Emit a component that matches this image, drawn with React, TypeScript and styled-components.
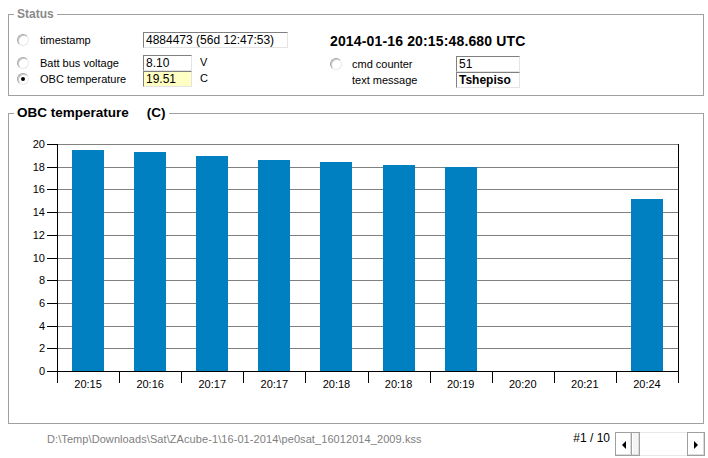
import React from "react";
import styled, { createGlobalStyle } from "styled-components";

const Global = createGlobalStyle`
  html, body { margin: 0; padding: 0; background: #fff; }
  body {
    font-family: "Liberation Sans", Arial, sans-serif;
    font-size: 11px;
    color: #000;
  }
`;

const Page = styled.div`
  width: 708px;
  height: 458px;
  box-sizing: border-box;
  padding: 7px 3px 0 8px;
  overflow: hidden;
  background: #fff;
`;

const GroupBox = styled.fieldset<{ $mt?: number }>`
  margin: ${(p) => p.$mt ?? 0}px 0 0 0;
  padding: 0;
  width: 696px;
  box-sizing: border-box;
  min-width: 0;
  border: 1px solid #a0a0a0;
`;

const Legend = styled.legend<{ $size: number; $lh: number; $color: string }>`
  margin-left: 5px;
  padding: 0 3px;
  font-weight: bold;
  font-size: ${(p) => p.$size}px;
  line-height: ${(p) => p.$lh}px;
  color: ${(p) => p.$color};
  white-space: nowrap;
`;

const LegendUnit = styled.span`
  margin-left: 18px;
`;

const StatusBody = styled.div`
  display: flex;
  padding: 11px 0 7px 8px;
`;

const Column = styled.div<{ $width?: number; $mt?: number }>`
  display: flex;
  flex-direction: column;
  width: ${(p) => (p.$width ? `${p.$width}px` : "auto")};
  margin-top: ${(p) => p.$mt ?? 0}px;
`;

const Row = styled.div<{ $mb?: number }>`
  display: flex;
  align-items: center;
  height: 16px;
  margin-bottom: ${(p) => p.$mb ?? 0}px;
`;

const RadioCell = styled.div<{ $width: number }>`
  width: ${(p) => p.$width}px;
  flex: none;
  display: flex;
  align-items: center;
`;

const Radio = styled.span<{ $checked?: boolean }>`
  position: relative;
  display: block;
  width: 12px;
  height: 12px;
  box-sizing: border-box;
  border-radius: 50%;
  border: 1px solid;
  border-color: #a8a8a8 #e8e8e8 #e8e8e8 #a8a8a8;
  background: #fff;
  box-shadow: inset 1px 1px 0 #c8c8c8;
  &::after {
    content: "";
    display: ${(p) => (p.$checked ? "block" : "none")};
    position: absolute;
    left: 3px;
    top: 3px;
    width: 4px;
    height: 4px;
    border-radius: 50%;
    background: #000;
  }
`;

const Label = styled.span<{ $width: number }>`
  width: ${(p) => p.$width}px;
  flex: none;
  font-size: 11px;
  line-height: 14px;
  white-space: nowrap;
`;

const Field = styled.div<{ $width: number; $bg?: string; $bold?: boolean }>`
  width: ${(p) => p.$width}px;
  height: 16px;
  flex: none;
  box-sizing: border-box;
  border-top: 1px solid #808080;
  border-left: 1px solid #808080;
  border-right: 1px solid #e4e4e4;
  border-bottom: 1px solid #e4e4e4;
  background: ${(p) => p.$bg ?? "#fff"};
  padding-left: 2px;
  font-size: 12px;
  line-height: 15px;
  font-weight: ${(p) => (p.$bold ? "bold" : "normal")};
  white-space: nowrap;
  overflow: hidden;
`;

const Unit = styled.span`
  margin-left: 8px;
  font-size: 11px;
  line-height: 14px;
  align-self: flex-start;
`;

const DateText = styled.div`
  font-size: 14px;
  font-weight: bold;
  line-height: 16px;
  height: 16px;
  margin-bottom: 7px;
  letter-spacing: 0.15px;
  white-space: nowrap;
`;

const ChartSvg = styled.svg`
  display: block;
  shape-rendering: crispEdges;
  font-family: "Liberation Sans", Arial, sans-serif;
  font-size: 11px;
`;

const BottomBar = styled.div`
  display: flex;
  align-items: flex-start;
  height: 34px;
`;

const PathText = styled.div`
  flex: 1;
  padding-left: 39px;
  margin-top: 8px;
  font-size: 11px;
  letter-spacing: 0.08px;
  line-height: 14px;
  color: #808080;
  white-space: nowrap;
`;

const Counter = styled.div`
  margin-top: 7px;
  margin-right: 5px;
  font-size: 12px;
  line-height: 14px;
  white-space: nowrap;
`;

const ScrollBar = styled.div`
  margin-top: 8px;
  width: 90px;
  height: 24px;
  display: flex;
  box-sizing: border-box;
`;

const ScrollButton = styled.div<{ $width: number }>`
  width: ${(p) => p.$width}px;
  height: 24px;
  flex: none;
  box-sizing: border-box;
  border: 1px solid #a0a0a0;
  box-shadow: inset -1px -1px 0 #dcdcdc, inset 1px 1px 0 #fff;
  background: #fff;
  display: flex;
  align-items: center;
  justify-content: center;
`;

const Arrow = styled.span<{ $dir: "left" | "right" }>`
  width: 0;
  height: 0;
  border-top: 4px solid transparent;
  border-bottom: 4px solid transparent;
  ${(p) =>
    p.$dir === "left"
      ? "border-right: 4px solid #000; margin-top: 2px;"
      : "border-left: 4px solid #000; margin-top: 2px;"}
`;

const Thumb = styled.div`
  width: 8px;
  height: 24px;
  flex: none;
  box-sizing: border-box;
  border: 1px solid #a0a0a0;
  border-left: none;
  box-shadow: inset -1px -1px 0 #dcdcdc, inset 1px 0 0 #fff;
  background: #f4f4f4;
`;

const Track = styled.div`
  flex: 1;
  height: 24px;
  box-sizing: border-box;
  border-top: 1px solid #e8e8e8;
  border-bottom: 1px solid #e8e8e8;
  background: #fff;
`;

const Y0 = 371;
const PX_PER_UNIT = 11.35;
const X0 = 57;
const CAT = 62.1;

const bars: { label: string; value: number | null }[] = [
  { label: "20:15", value: 19.47 },
  { label: "20:16", value: 19.3 },
  { label: "20:17", value: 18.94 },
  { label: "20:17", value: 18.59 },
  { label: "20:18", value: 18.41 },
  { label: "20:18", value: 18.18 },
  { label: "20:19", value: 18.0 },
  { label: "20:20", value: null },
  { label: "20:21", value: null },
  { label: "20:24", value: 15.15 },
];

const yRow = (v: number) => Math.round(Y0 - v * PX_PER_UNIT);

function Chart() {
  const grid = [0, 2, 4, 6, 8, 10, 12, 14, 16, 18, 20];
  const right = Math.round(X0 + CAT * 10);
  const top = yRow(20);
  return (
    <ChartSvg width={693} height={302} viewBox="9 121 693 302">
      {grid.map((v) => {
        const r = yRow(v) + 0.5;
        return (
          <g key={v}>
            {v > 0 && (
              <line x1={X0 + 1} x2={right} y1={r} y2={r} stroke="#808080" strokeWidth={1} />
            )}
            <line x1={47} x2={X0} y1={r} y2={r} stroke="#000" strokeWidth={1} />
            <text x={45} y={yRow(v) + 4} textAnchor="end" fill="#000">
              {v}
            </text>
          </g>
        );
      })}
      {bars.map((b, i) => {
        const center = X0 + CAT * (i + 0.5);
        const left = Math.round(center - 16);
        if (b.value === null) return null;
        const t = Math.round(Y0 - b.value * PX_PER_UNIT);
        return <rect key={`b${i}`} x={left} y={t} width={32} height={Y0 - t} fill="#0080c0" />;
      })}
      <line x1={X0} x2={right + 1} y1={Y0 + 0.5} y2={Y0 + 0.5} stroke="#000" strokeWidth={1} />
      <line x1={X0 + 0.5} x2={X0 + 0.5} y1={top} y2={383} stroke="#000" strokeWidth={1} />
      <line x1={right + 0.5} x2={right + 0.5} y1={top} y2={383} stroke="#000" strokeWidth={1} />
      {bars.map((b, i) => {
        const tx = Math.round(X0 + CAT * i) + 0.5;
        const center = X0 + CAT * (i + 0.5);
        return (
          <g key={`t${i}`}>
            {i > 0 && <line x1={tx} x2={tx} y1={Y0} y2={383} stroke="#000" strokeWidth={1} />}
            <text x={center} y={388} textAnchor="middle" fill="#000">
              {b.label}
            </text>
          </g>
        );
      })}
    </ChartSvg>
  );
}

export default function App() {
  return (
    <>
      <Global />
      <Page>
        <GroupBox>
          <Legend $size={12} $lh={14} $color="#8a8a8a">
            Status
          </Legend>
          <StatusBody>
            <Column $width={313}>
              <Row $mb={7}>
                <RadioCell $width={23}>
                  <Radio />
                </RadioCell>
                <Label $width={103}>timestamp</Label>
                <Field $width={145}>4884473 (56d 12:47:53)</Field>
              </Row>
              <Row>
                <RadioCell $width={23}>
                  <Radio />
                </RadioCell>
                <Label $width={103}>Batt bus voltage</Label>
                <Field $width={49}>8.10</Field>
                <Unit>V</Unit>
              </Row>
              <Row>
                <RadioCell $width={23}>
                  <Radio $checked />
                </RadioCell>
                <Label $width={103}>OBC temperature</Label>
                <Field $width={49} $bg="#ffffc4">
                  19.51
                </Field>
                <Unit>C</Unit>
              </Row>
            </Column>
            <Column $mt={1}>
              <DateText>2014-01-16 20:15:48.680 UTC</DateText>
              <Row>
                <RadioCell $width={22}>
                  <Radio />
                </RadioCell>
                <Label $width={104}>cmd counter</Label>
                <Field $width={64}>51</Field>
              </Row>
              <Row>
                <RadioCell $width={22} />
                <Label $width={104}>text message</Label>
                <Field $width={64} $bold>
                  Tshepiso
                </Field>
              </Row>
            </Column>
          </StatusBody>
        </GroupBox>
        <GroupBox $mt={9}>
          <Legend $size={13.5} $lh={16} $color="#000">
            OBC temperature<LegendUnit>(C)</LegendUnit>
          </Legend>
          <Chart />
        </GroupBox>
        <BottomBar>
          <PathText>D:\Temp\Downloads\Sat\ZAcube-1\16-01-2014\pe0sat_16012014_2009.kss</PathText>
          <Counter>#1 / 10</Counter>
          <ScrollBar>
            <ScrollButton $width={17}>
              <Arrow $dir="left" />
            </ScrollButton>
            <Thumb />
            <Track />
            <ScrollButton $width={18}>
              <Arrow $dir="right" />
            </ScrollButton>
          </ScrollBar>
        </BottomBar>
      </Page>
    </>
  );
}
